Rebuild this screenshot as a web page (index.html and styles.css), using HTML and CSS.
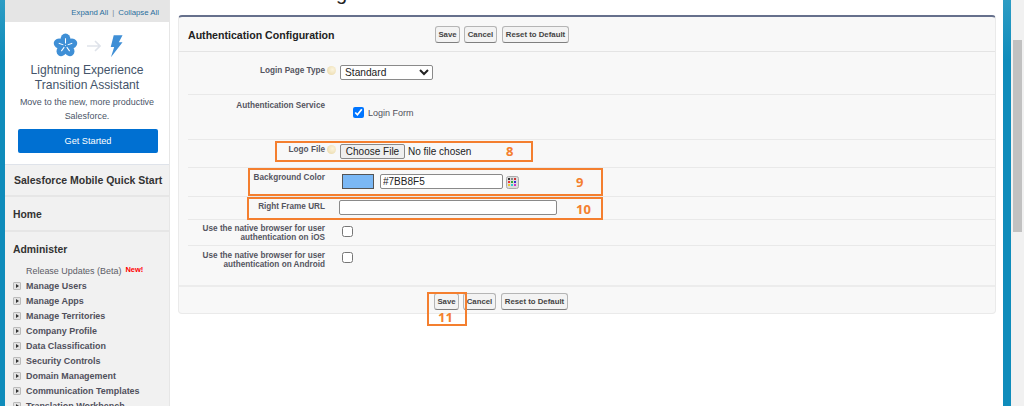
FILE: index.html
```html
<!DOCTYPE html>
<html lang="en">
<head>
<meta charset="utf-8">
<title>Authentication Configuration</title>
<link rel="stylesheet" href="styles.css">
</head>
<body>
<div class="page">
  <div class="stripe"></div>
  <aside class="sidebar">
    <div class="expand"><a>Expand All</a><span class="pipe">|</span><a>Collapse All</a></div>
    <div class="card">
      <div class="card-icons">
        <svg width="25" height="25" viewBox="0 0 24 24"><g fill="#3f8fd6"><ellipse cx="12" cy="6" rx="4.800" ry="5.600"/><ellipse cx="12" cy="6" rx="4.800" ry="5.600" transform="rotate(72 12 12)"/><ellipse cx="12" cy="6" rx="4.800" ry="5.600" transform="rotate(144 12 12)"/><ellipse cx="12" cy="6" rx="4.800" ry="5.600" transform="rotate(216 12 12)"/><ellipse cx="12" cy="6" rx="4.800" ry="5.600" transform="rotate(288 12 12)"/></g><g stroke="#fff" stroke-width="1"><path d="M12 10V5M14 11.400l4.500-1.500M13.200 13.600l2.800 3.800M10.800 13.600L8 17.400M10 11.400L5.500 9.900"/></g></svg>
        <svg class="arrow" width="14" height="14" viewBox="0 0 14 14"><path d="M0 7h13M8 2l5 5-5 5" fill="none" stroke="#dfe3ea" stroke-width="1.600"/></svg>
        <svg width="13" height="24" viewBox="0 0 14 25"><path d="M4 1h9.500L9.500 8.500h4L1 24.500l3.500-11H.8z" fill="#3f8fd6"/></svg>
      </div>
      <h2 class="card-title">Lightning Experience<br>Transition Assistant</h2>
      <p class="card-text">Move to the new, more productive<br>Salesforce.</p>
      <a class="card-btn">Get Started</a>
    </div>
    <div class="side-head quick">Salesforce Mobile Quick Start</div>
    <div class="side-head home">Home</div>
    <div class="side-admin">
      <div class="admin-title">Administer</div>
      <div class="item plain">Release Updates (Beta) <span class="new">New!</span></div>
      <div class="item"><i class="tw"></i>Manage Users</div>
      <div class="item"><i class="tw"></i>Manage Apps</div>
      <div class="item"><i class="tw"></i>Manage Territories</div>
      <div class="item"><i class="tw"></i>Company Profile</div>
      <div class="item"><i class="tw"></i>Data Classification</div>
      <div class="item"><i class="tw"></i>Security Controls</div>
      <div class="item"><i class="tw"></i>Domain Management</div>
      <div class="item"><i class="tw"></i>Communication Templates</div>
      <div class="item"><i class="tw"></i>Translation Workbench</div>
    </div>
  </aside>
  <main class="main">
    <div class="clipped-title">g</div>
    <section class="panel">
      <header class="panel-head">
        <h2 class="panel-title">Authentication Configuration</h2>
        <div class="btns"><button class="btn b-save">Save</button><button class="btn b-cancel">Cancel</button><button class="btn b-reset">Reset to Default</button></div>
      </header>
      <div class="panel-body">
        <div class="row r1"><div class="lbl">Login Page Type<i class="help"></i></div><div class="val"><select class="sel"><option>Standard</option></select></div></div>
        <div class="row r2"><div class="lbl">Authentication Service</div><div class="val svc"><input type="checkbox" class="chk" checked><span>Login Form</span></div></div>
        <div class="row r3"><div class="lbl">Logo File<i class="help"></i></div><div class="val file"><span class="file-btn">Choose File</span><span>No file chosen</span></div></div>
        <div class="row r4"><div class="lbl">Background Color</div><div class="val color"><span class="swatch"></span><input class="txt hex" value="#7BB8F5"><svg class="palette" width="13" height="13" viewBox="0 0 13 13"><rect x=".5" y=".5" width="12" height="12" rx="2" fill="#ddd" stroke="#aaa"/><g><rect x="2" y="2" width="2" height="2" fill="#333"/><rect x="5" y="2" width="2" height="2" fill="#888"/><rect x="8" y="2" width="2" height="2" fill="#c33"/><rect x="2" y="5" width="2" height="2" fill="#e33"/><rect x="5" y="5" width="2" height="2" fill="#3a3"/><rect x="8" y="5" width="2" height="2" fill="#33c"/><rect x="2" y="8" width="2" height="2" fill="#ec3"/><rect x="5" y="8" width="2" height="2" fill="#3cc"/><rect x="8" y="8" width="2" height="2" fill="#c3c"/></g></svg></div></div>
        <div class="row r5"><div class="lbl">Right Frame URL</div><div class="val"><input class="txt url"></div></div>
        <div class="row r6"><div class="lbl">Use the native browser for user authentication on iOS</div><div class="val"><input type="checkbox" class="chk"></div></div>
        <div class="row r7 last"><div class="lbl">Use the native browser for user authentication on Android</div><div class="val"><input type="checkbox" class="chk"></div></div>
      </div>
      <footer class="panel-foot">
        <div class="btns"><button class="btn b-save">Save</button><button class="btn b-cancel">Cancel</button><button class="btn b-reset">Reset to Default</button></div>
      </footer>
    </section>
    <div class="note n8"><b>8</b></div>
    <div class="note n9"><b>9</b></div>
    <div class="note n10"><b>10</b></div>
    <div class="note n11"><b>11</b></div>
  </main>
  <div class="teal"></div>
  <div class="scrollbar"><div class="thumb"></div></div>
</div>
</body>
</html>
```
FILE: styles.css
```css
* { box-sizing: border-box; }
html, body { margin: 0; height: 406px; overflow: hidden; background: #fff; }
body { font-family: "Liberation Sans", Arial, sans-serif; color: #333; }
.page { display: flex; width: 1024px; height: 406px; overflow: hidden; }
.stripe { width: 5px; background: linear-gradient(#2d9cc4, #0f8cbb 60px); }
.sidebar { width: 165px; background: #f1f1f1; border-right: 1px solid #e6e6e6; }
.expand { height: 22px; background: #e5e5e5; display: flex; justify-content: flex-end; align-items: center; gap: 4px; padding: 3px 10px 0 0; font-size: 7.800px; color: #2a6f9e; }
.pipe { color: #7a8a96; }
.card { height: 143px; background: #fff; border-bottom: 1px solid #dfe3ea; text-align: center; padding: 11px 0 0 2px; }
.card-icons { display: flex; justify-content: center; align-items: center; gap: 9px; height: 25px; }
.card-title { margin: 5px 0 0 -2px; font-size: 12.100px; line-height: 15px; font-weight: 400; color: #44546a; }
.card-text { margin: 2px 0 0 -2px; font-size: 8.950px; line-height: 14px; color: #4b5568; }
.card-btn { display: block; margin: 6px 11px 0 11px; height: 24px; line-height: 24px; border-radius: 2px; background: #0070d2; color: #fff; font-size: 9.200px; }
.side-head { font-weight: 700; color: #333; border-bottom: 2px solid #e6e6e6; padding-left: 8px; }
.quick { height: 32px; font-size: 10.500px; line-height: 31px; padding-left: 9px; }
.home { height: 35px; font-size: 10.400px; line-height: 36px; }
.side-admin { padding: 11px 0 0 8px; }
.admin-title { font-size: 10.400px; font-weight: 700; line-height: 14px; margin-bottom: 7px; color: #333; }
.item { display: flex; align-items: center; height: 15px; font-size: 8.950px; font-weight: 700; color: #50505c; white-space: nowrap; padding-left: 13px; }
.item.plain { font-weight: 400; padding-left: 13px; color: #5c5c66; margin-top: -1px; }
.new { font-size: 7.500px; color: #f00; font-weight: 700; margin-left: 4px; margin-top: -2px; }
.tw { width: 8px; height: 8px; margin-left: -13px; margin-right: 5px; background: #e3e3e3; border: 1px solid #bbb; border-radius: 1px; flex: none; }
.tw::after { content: ""; display: block; margin: 1px 0 0 2px; width: 0; height: 0; border-left: 3px solid #333; border-top: 2px solid transparent; border-bottom: 2px solid transparent; }
.main { position: relative; width: 833px; padding: 0 7px 0 8px; }
.clipped-title { height: 22px; margin-top: -7px; font-size: 20px; line-height: 0; padding-left: 158px; color: #222; overflow: hidden; }
.panel { height: 299px; background: #f8f8f8; border: 1px solid #eaeaea; border-top: 2px solid #66708c; border-radius: 4px; display: flex; flex-direction: column; }
.panel-head { height: 35px; flex: none; display: flex; align-items: center; border-bottom: 1px solid #e4e4e4; padding: 1px 0 0 9px; }
.panel-title { margin: 0; width: 247px; font-size: 10.600px; font-weight: 700; color: #222; white-space: nowrap; }
.btns { display: flex; gap: 4px; }
.btn { height: 17px; padding: 0; font: 700 7.800px "Liberation Sans", Arial, sans-serif; color: #444; background: #f3f3f3; border: 1px solid #b5b5b5; border-bottom-color: #7f7f7f; border-radius: 3px; white-space: nowrap; }
.b-save { width: 25px; }
.b-cancel { width: 33px; }
.b-reset { width: 67px; margin-left: 1px; }
.panel-body { flex: none; height: 235px; border-bottom: 2px solid #ececec; }
.row { display: flex; margin: 0 0 0 9px; border-bottom: 1px solid #e9e9e9; }
.row.last { border-bottom: 0; }
.r1 { height: 43px; } .r2 { height: 45px; } .r3 { height: 28px; } .r4 { height: 29px; } .r5 { height: 23px; } .r6 { height: 26px; } .r7 { height: 25px; }
.lbl { width: 137px; flex: none; text-align: right; font-size: 8.200px; line-height: 9.300px; font-weight: 700; color: #55555f; position: relative; }
.val { padding-left: 14px; display: flex; align-items: flex-start; font-size: 10px; color: #222; }
.r1 .lbl { padding-top: 14px; } .r1 .val { padding: 13px 0 0 15px; }
.r2 .lbl { padding-top: 6px; } .r2 .val { padding-top: 12px; }
.r3 .lbl { padding-top: 5px; } .r3 .val { padding: 4px 0 0 15px; }
.r4 .lbl { padding-top: 5px; } .r4 .val { padding-top: 6px; }
.r5 .lbl { padding-top: 5px; } .r5 .val { padding-top: 3px; }
.r6 .lbl { padding-top: 4px; } .r6 .val { padding: 6px 0 0 17px; }
.r7 .lbl { padding-top: 5px; } .r7 .val { padding: 6px 0 0 17px; }
.help { position: absolute; left: 139px; width: 9px; height: 9px; border-radius: 50%; background: radial-gradient(circle at 60% 40%, #fbf4de, #e8d6a4); }
.r1 .help { top: 14px; } .r3 .help { top: 5px; }
.sel { width: 93px; height: 15px; font: 10.200px "Liberation Sans", Arial, sans-serif; color: #222; background: #fff; border: 1px solid #8a8a8a; border-radius: 2px; padding: 0; }
.chk { width: 11px; height: 11px; margin: 0; accent-color: #0075ff; }
.svc { padding-left: 28px; gap: 4px; font-size: 9px; color: #50505c; }
.svc span { padding-top: 1px; }
.file { gap: 3px; font-size: 10px; line-height: 15px; }
.file-btn { display: block; width: 65px; height: 15px; line-height: 13px; text-align: center; background: #efefef; border: 1px solid #8a8a8a; border-radius: 2px; }
.color { gap: 6px; padding-left: 17px; }
.swatch { width: 32px; height: 15px; background: #7bb8f5; border: 1px solid #555; }
.txt { height: 15px; border: 1px solid #8a8a8a; border-radius: 2px; background: #fff; font: 10px "Liberation Sans", Arial, sans-serif; color: #222; padding: 0 2px; }
.hex { width: 123px; }
.palette { margin: 2px 0 0 -3px; }
.url { width: 218px; }
.panel-foot { flex: 1; padding: 6px 0 0 255px; }
.note { position: absolute; border: 2px solid #f47f2f; font: 700 13px "Open Sans", "Liberation Sans", sans-serif; color: #f47f2f; }
.note b { position: absolute; font-weight: 700; }
.n8 { left: 105px; top: 141px; width: 258px; height: 21px; }
.n8 b { left: 229px; top: -1px; }
.n9 { left: 78px; top: 168px; width: 355px; height: 28px; }
.n9 b { left: 326px; top: 3px; }
.n10 { left: 77px; top: 197px; width: 356px; height: 23px; }
.n10 b { left: 327px; top: 1px; }
.n11 { left: 257px; top: 292px; width: 40px; height: 34px; }
.n11 b { left: 9px; top: 14px; }
.teal { width: 8px; background: linear-gradient(#2d9cc4, #0f8cbb 60px); }
.scrollbar { flex: 1; background: #f1f1f1; padding: 40px 2px 0 2px; }
.thumb { height: 192px; background: #c1c1c1; }
```
